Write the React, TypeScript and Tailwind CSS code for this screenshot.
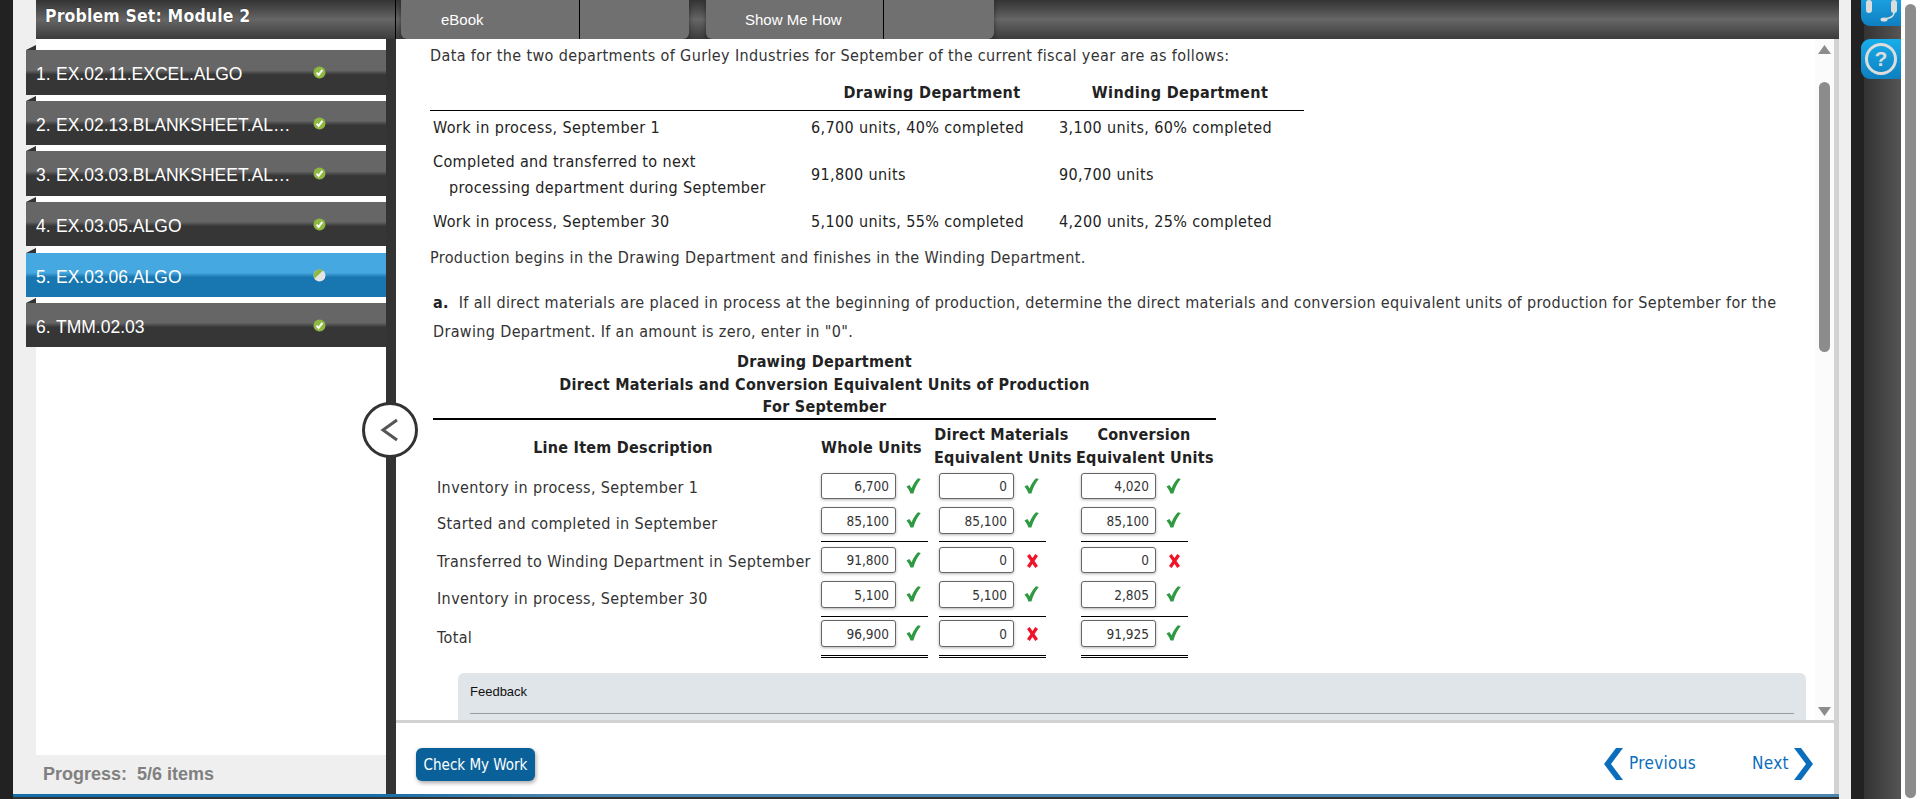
import React from 'react';

const items = [
  { n: '1.', t: 'EX.02.11.EXCEL.ALGO', box: 'h-[45px] mt-[11px]' },
  { n: '2.', t: 'EX.02.13.BLANKSHEET.ALGO', box: 'h-[44px] mt-[6px]' },
  { n: '3.', t: 'EX.03.03.BLANKSHEET.ALGO', box: 'h-[45px] mt-[6px]' },
  { n: '4.', t: 'EX.03.05.ALGO', box: 'h-[44px] mt-[6px]' },
  { n: '5.', t: 'EX.03.06.ALGO', box: 'h-[44px] mt-[7px]', active: true },
  { n: '6.', t: 'TMM.02.03', box: 'h-[44px] mt-[6px]' },
];

function Status({ partial }: { partial?: boolean }) {
  return (
    <svg width="13" height="13" viewBox="0 0 13 13" className="ml-[21px] -mt-[4px] shrink-0">
      <circle cx="6.5" cy="6.5" r="6" fill={partial ? '#e4e4e4' : '#8fb840'} />
      {partial ? (
        <path d="M1.5 9.5 A6 6 0 0 1 10 1.5 Z" fill="#8fb840" />
      ) : (
        <path d="M3.6 6.6 L5.6 9 L9.4 3.8" fill="none" stroke="#fff" strokeWidth="2" />
      )}
    </svg>
  );
}

function Check() {
  return (
    <svg width="15" height="16" viewBox="0 0 15 16" className="mt-[5px] shrink-0">
      <path d="M0.5 8.6 L3.4 7 L5.6 10.2 C7.2 6.2 9.4 2.8 12 0.3 L14.8 1 C11.2 5.2 9 10 7.4 15.6 L4.4 15.6 C3.6 13 2.2 10.8 0.5 8.6 Z" fill="#2f9a41" />
    </svg>
  );
}

function Cross() {
  return (
    <svg width="11" height="14" viewBox="0 0 11 14" className="mt-[7px] ml-[3px] mr-[1px] shrink-0">
      <path d="M1.3 1 L9.7 13 M9.7 1 L1.3 13" stroke="#f0142a" strokeWidth="3.4" fill="none" />
    </svg>
  );
}

function Cell({ v, ok, line, h }: { v: string; ok: boolean; line?: string; h?: string }) {
  return (
    <div className={`w-[107px] flex items-start gap-[10px] ${line ?? ''}`}>
      <input
        readOnly
        value={v}
        className={`w-[75px] ${h ?? 'h-[26px]'} border border-[#666] rounded-[3px] bg-white text-right pr-[6px] text-[#333] text-[13.5px] tracking-normal shadow-[0_1px_3px_rgba(0,0,0,0.3)] outline-none`}
      />
      {ok ? <Check /> : <Cross />}
    </div>
  );
}

const cols = 'grid grid-cols-[388px_118px_142px_135px] w-[783px]';

function Row({
  label,
  rowClass,
  labelClass,
  cells,
  line,
  h,
}: {
  label: string;
  rowClass: string;
  labelClass: string;
  cells: [string, boolean][];
  line?: string;
  h?: string;
}) {
  return (
    <div className={`${cols} ${rowClass}`}>
      <div className={`pl-[4px] leading-[20px] whitespace-nowrap text-[#333] ${labelClass}`}>{label}</div>
      {cells.map(([v, ok], i) => (
        <Cell key={i} v={v} ok={ok} line={line} h={h} />
      ))}
    </div>
  );
}

export default function App() {
  return (
    <div className="relative w-[1920px] h-[799px] overflow-hidden flex bg-white font-['DejaVu_Sans_Condensed','DejaVu_Sans',sans-serif] text-[16px] tracking-[0.38px] text-[#333]">
      <div className="w-[13px] shrink-0 bg-[#222]" />

      <div className="w-[1826px] shrink-0 flex flex-col bg-[#efefef]">
        {/* header */}
        <div className="ml-[23px] h-[39px] shrink-0 flex bg-gradient-to-b from-[#333] via-[#666] to-[#3c3c3c]">
          <div className="w-[360px] shrink-0 border-r border-black pl-[9px] leading-[33px] font-bold text-[17.5px] tracking-[0.15px] text-white [text-shadow:0_0_1px_#000]">
            Problem Set: Module 2
          </div>
          <div className="ml-[5px] w-[288px] shrink-0 h-[39px] flex rounded-b-[6px] bg-[#707070] shadow-[0_2px_5px_rgba(0,0,0,0.45)] font-['Liberation_Sans',sans-serif] text-white text-[15px] tracking-normal leading-[40px]">
            <div className="w-[179px] border-r border-black pl-[40px]">eBook</div>
          </div>
          <div className="ml-[17px] w-[288px] shrink-0 h-[39px] flex rounded-b-[6px] bg-[#707070] shadow-[0_2px_5px_rgba(0,0,0,0.45)] font-['Liberation_Sans',sans-serif] text-white text-[15px] tracking-normal leading-[40px]">
            <div className="w-[178px] border-r border-black pl-[39px]">Show Me How</div>
          </div>
        </div>

        <div className="flex-1 min-h-0 flex">
          {/* sidebar */}
          <div className="w-[373px] shrink-0 flex flex-col">
            <div className="flex-1 min-h-0 ml-[23px] bg-white flex flex-col">
              {items.map((it) => (
                <div
                  key={it.n}
                  className={`relative -ml-[10px] w-[360px] shrink-0 flex items-center pl-[10px] pt-[4px] font-['Liberation_Sans',sans-serif] text-[17.5px] tracking-normal text-white ${it.box} ${
                    it.active
                      ? 'bg-gradient-to-b from-[#46a8e0] from-45% to-[#1876b0] to-55%'
                      : 'bg-gradient-to-b from-[#666] from-45% to-[#363636] to-55%'
                  }`}
                >
                  <span className="absolute left-0 -top-[5px] w-0 h-0 border-l-[10px] border-l-transparent border-b-[5px] border-b-[#333]" />
                  <span className="w-[20px] shrink-0">{it.n}</span>
                  <span className="w-[236px] truncate">{it.t}</span>
                  <Status partial={it.active} />
                </div>
              ))}
            </div>
            <div className="h-[39px] shrink-0 pl-[30px] leading-[39px] font-['Liberation_Sans',sans-serif] font-bold text-[18px] tracking-normal text-[#808080] whitespace-pre">
              Progress:  5/6 items
            </div>
          </div>

          {/* divider */}
          <div className="w-[10px] shrink-0 bg-[#333]" />

          {/* main */}
          <div className="flex-1 min-w-0 flex flex-col bg-white">
            <div className="flex-1 min-h-0 flex">
              <div className="flex-1 min-w-0 overflow-hidden pl-[34px]">
                <div className="mt-[7px] leading-[20px] whitespace-nowrap">
                  Data for the two departments of Gurley Industries for September of the current fiscal year are as follows:
                </div>

                <table className="mt-[17px] w-[874px] table-fixed border-collapse">
                  <colgroup>
                    <col className="w-[378px]" />
                    <col className="w-[248px]" />
                    <col className="w-[248px]" />
                  </colgroup>
                  <thead>
                    <tr className="h-[27px] border-b border-black align-top">
                      <th />
                      <th className="font-bold text-center leading-[20px] text-[#222]">Drawing Department</th>
                      <th className="font-bold text-center leading-[20px] text-[#222]">Winding Department</th>
                    </tr>
                  </thead>
                  <tbody className="text-[#222]">
                    <tr className="h-[36px]">
                      <td className="pl-[3px]">Work in process, September 1</td>
                      <td className="pl-[3px]">6,700 units, 40% completed</td>
                      <td className="pl-[3px]">3,100 units, 60% completed</td>
                    </tr>
                    <tr className="h-[58px]">
                      <td className="pl-[3px] leading-[26px]">
                        Completed and transferred to next
                        <br />
                        <span className="pl-[16px]">processing department during September</span>
                      </td>
                      <td className="pl-[3px]">91,800 units</td>
                      <td className="pl-[3px]">90,700 units</td>
                    </tr>
                    <tr className="h-[36px]">
                      <td className="pl-[3px]">Work in process, September 30</td>
                      <td className="pl-[3px]">5,100 units, 55% completed</td>
                      <td className="pl-[3px]">4,200 units, 25% completed</td>
                    </tr>
                  </tbody>
                </table>

                <div className="mt-[8px] leading-[20px] whitespace-nowrap tracking-[0.34px]">
                  Production begins in the Drawing Department and finishes in the Winding Department.
                </div>

                <div className="mt-[20px] pl-[3px] leading-[29px] whitespace-nowrap tracking-[0.35px]">
                  <b className="text-[#222]">a.</b>&nbsp; If all direct materials are placed in process at the beginning of production, determine the direct materials and conversion equivalent units of production for September for the
                  <br />
                  Drawing Department. If an amount is zero, enter in "0".
                </div>

                <div className="ml-[3px] mt-[5px] w-[783px]">
                  <div className="text-center font-bold leading-[22.5px] tracking-[0.26px] text-[#222] border-b-2 border-black h-[69px]">
                    Drawing Department
                    <br />
                    Direct Materials and Conversion Equivalent Units of Production
                    <br />
                    For September
                  </div>
                  <div className={`${cols} h-[53px] pt-[3px] font-bold leading-[23px] tracking-[0.26px] text-[#222] text-center`}>
                    <div className="self-center -mt-[2px] pr-[8px]">Line Item Description</div>
                    <div className="self-center -mt-[2px] whitespace-nowrap text-left">Whole Units</div>
                    <div className="whitespace-nowrap w-[135px] text-center -ml-[5px]">
                      Direct Materials
                      <br />
                      Equivalent Units
                    </div>
                    <div className="whitespace-nowrap w-[136px] text-center -ml-[5px]">
                      Conversion
                      <br />
                      Equivalent Units
                    </div>
                  </div>
                  <Row
                    label="Inventory in process, September 1"
                    rowClass="h-[34px]"
                    labelClass="pt-[5px]"
                    cells={[['6,700', true], ['0', true], ['4,020', true]]}
                  />
                  <Row
                    label="Started and completed in September"
                    rowClass="h-[35px]"
                    labelClass="pt-[7px]"
                    line="border-b border-black"
                    h="h-[27px]"
                    cells={[['85,100', true], ['85,100', true], ['85,100', true]]}
                  />
                  <Row
                    label="Transferred to Winding Department in September"
                    rowClass="h-[39px] pt-[5px]"
                    labelClass="pt-[5px]"
                    cells={[['91,800', true], ['0', false], ['0', false]]}
                  />
                  <Row
                    label="Inventory in process, September 30"
                    rowClass="h-[36px]"
                    labelClass="pt-[8px]"
                    line="border-b border-black"
                    h="h-[27px]"
                    cells={[['5,100', true], ['5,100', true], ['2,805', true]]}
                  />
                  <Row
                    label="Total"
                    rowClass="h-[41px] pt-[3px]"
                    labelClass="pt-[8px]"
                    line="border-b-[3px] border-double border-black"
                    h="h-[27px]"
                    cells={[['96,900', true], ['0', false], ['91,925', true]]}
                  />
                </div>

                <div className="ml-[28px] mt-[15px] w-[1348px] h-[60px] rounded-t-[6px] bg-[#dfe5e8] px-[12px] pt-[11px]">
                  <div className="h-[30px] border-b border-[#999] font-['Liberation_Sans',sans-serif] text-[13px] tracking-normal leading-[16px] text-[#111]">
                    Feedback
                  </div>
                </div>
              </div>

              {/* content scrollbar */}
              <div className="w-[19px] shrink-0 bg-[#fbfbfb] flex flex-col items-center pt-[6px] pb-[4px]">
                <svg width="13" height="9" viewBox="0 0 13 9">
                  <path d="M6.5 0 L13 9 L0 9 Z" fill="#8c8c8c" />
                </svg>
                <div className="mt-[28px] w-[11px] h-[270px] rounded-full bg-[#8c8c8c]" />
                <svg width="13" height="9" viewBox="0 0 13 9" className="mt-auto">
                  <path d="M0 0 L13 0 L6.5 9 Z" fill="#8c8c8c" />
                </svg>
              </div>
              <div className="w-[5px] shrink-0 bg-[#d2d2d2]" />
            </div>

            {/* footer */}
            <div className="h-[74px] shrink-0 border-t-[3px] border-r-[5px] border-[#d2d2d2] bg-white flex items-center pl-[20px]">
              <div className="mt-[12px] w-[119px] h-[33px] rounded-[6px] bg-[#0a6199] text-white text-[15px] tracking-normal leading-[35px] text-center shadow-[1px_2px_4px_rgba(0,0,0,0.35)]">
                Check My Work
              </div>
              <div className="ml-auto flex items-center text-[#0a6ebd] text-[17px] tracking-[0.3px] mt-[11px] pr-[21px]">
                <svg width="19" height="32" viewBox="0 0 19 32">
                  <path d="M12 0 L19 0 L7 16 L19 32 L12 32 L0 16 Z" fill="#0a6ebd" />
                </svg>
                <span className="ml-[6px] w-[123px]">Previous</span>
                <span className="w-[42px]">Next</span>
                <svg width="19" height="32" viewBox="0 0 19 32">
                  <path d="M0 0 L7 0 L19 16 L7 32 L0 32 L12 16 Z" fill="#0a6ebd" />
                </svg>
              </div>
            </div>
          </div>
        </div>

        <div className="h-[3px] shrink-0 bg-gradient-to-r from-[#146ea8] from-20% to-[#4a86ad] to-30%" />
        <div className="h-[2px] shrink-0 bg-[#333]" />
      </div>

      {/* right rail */}
      <div className="w-[12px] shrink-0 bg-[#efefef]" />
      <div className="w-[13px] shrink-0 bg-[#222]" />
      <div className="w-[37px] shrink-0 bg-gradient-to-r from-[#333] to-[#555] flex flex-col items-end">
        <div className="relative w-[40px] h-[26px] rounded-bl-[9px] overflow-hidden bg-gradient-to-b from-[#1a9fdf] to-[#0f7fc0] shrink-0">
          <svg width="40" height="26" viewBox="0 0 40 26" className="absolute inset-0">
            <rect x="5" y="0" width="6" height="13" rx="3" fill="#ddd" />
            <rect x="30" y="0" width="6" height="13" rx="3" fill="#ddd" />
            <path d="M33 12 C33 17 29 18 24 19" fill="none" stroke="#ddd" strokeWidth="1.5" />
            <ellipse cx="23" cy="19.5" rx="3.5" ry="2" fill="#ddd" />
          </svg>
        </div>
        <div className="mt-[13px] w-[40px] h-[40px] rounded-l-[9px] bg-gradient-to-b from-[#18aeea] to-[#0f7fc0] flex items-center justify-start pl-[4px] shrink-0">
          <div className="w-[32px] h-[32px] rounded-full border-[3px] border-[#ddd] text-[#ddd] font-['Liberation_Sans',sans-serif] font-bold text-[21px] tracking-normal leading-[26px] text-center">
            ?
          </div>
        </div>
      </div>
      <div className="flex-1 bg-white pl-[4px] pr-[4px] pt-[4px] pb-[1px]">
        <div className="h-full rounded-full bg-[#8c8c8c]" />
      </div>

      {/* collapse toggle */}
      <div className="absolute left-[362px] top-[402px] w-[56px] h-[56px] rounded-full bg-white border-[3px] border-[#333] flex items-center justify-center">
        <svg width="20" height="24" viewBox="0 0 20 24">
          <path d="M17 2 L3 12 L17 22" fill="none" stroke="#555" strokeWidth="3" />
        </svg>
      </div>
    </div>
  );
}
